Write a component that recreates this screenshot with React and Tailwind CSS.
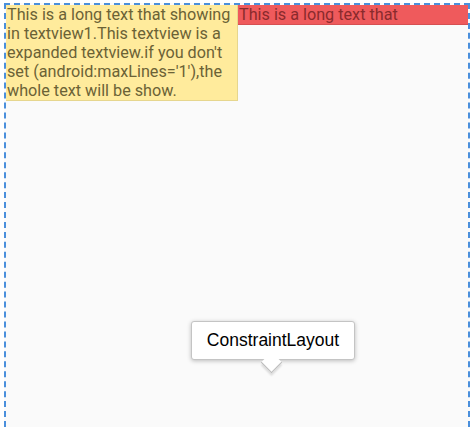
export default function App() {
  return (
    <div className="w-[474px] h-[429px] bg-white overflow-hidden relative">
      <div className="absolute left-[4px] top-[3px] w-[466px] h-[424px] bg-[#fafafa] border-2 border-dashed border-b-0 border-[#4a8fdc]">
        <div className="flex items-start" style={{ fontFamily: "Roboto, sans-serif" }}>
          <div className="w-[232px] h-[96px] bg-[#ffeb9c] text-[#6b6236] text-[16.2px] leading-[19px] pl-[1px] pt-0 border-r border-b border-[#e6d68e]">
            This is a long text that showing in textview1.This textview is a expanded textview.if you don't set (android:maxLines='1'),the whole text will be show.
          </div>
          <div className="flex-1 h-[20px] bg-[#ef5a5c] text-[#8a2a2c] text-[16.2px] leading-[19px] pl-[1px] pt-0 overflow-hidden whitespace-nowrap border-b border-[#d65052]">
            This is a long text that
          </div>
        </div>
      </div>
      <div className="absolute left-[191px] top-[321px] w-[164px] h-[39px] bg-white border border-[#c4c4c4] rounded-[3px] shadow-[0_1px_4px_rgba(0,0,0,0.25)] flex items-center justify-center text-[17.5px] text-black" style={{ fontFamily: "'Liberation Sans', Arial, sans-serif" }}>
        ConstraintLayout
        <div className="absolute left-[72px] top-[33px] w-[15px] h-[15px] bg-white border-r border-b border-[#b8b8b8] rotate-45 shadow-[2px_2px_2px_rgba(0,0,0,0.12)]"></div>
      </div>
    </div>
  );
}
